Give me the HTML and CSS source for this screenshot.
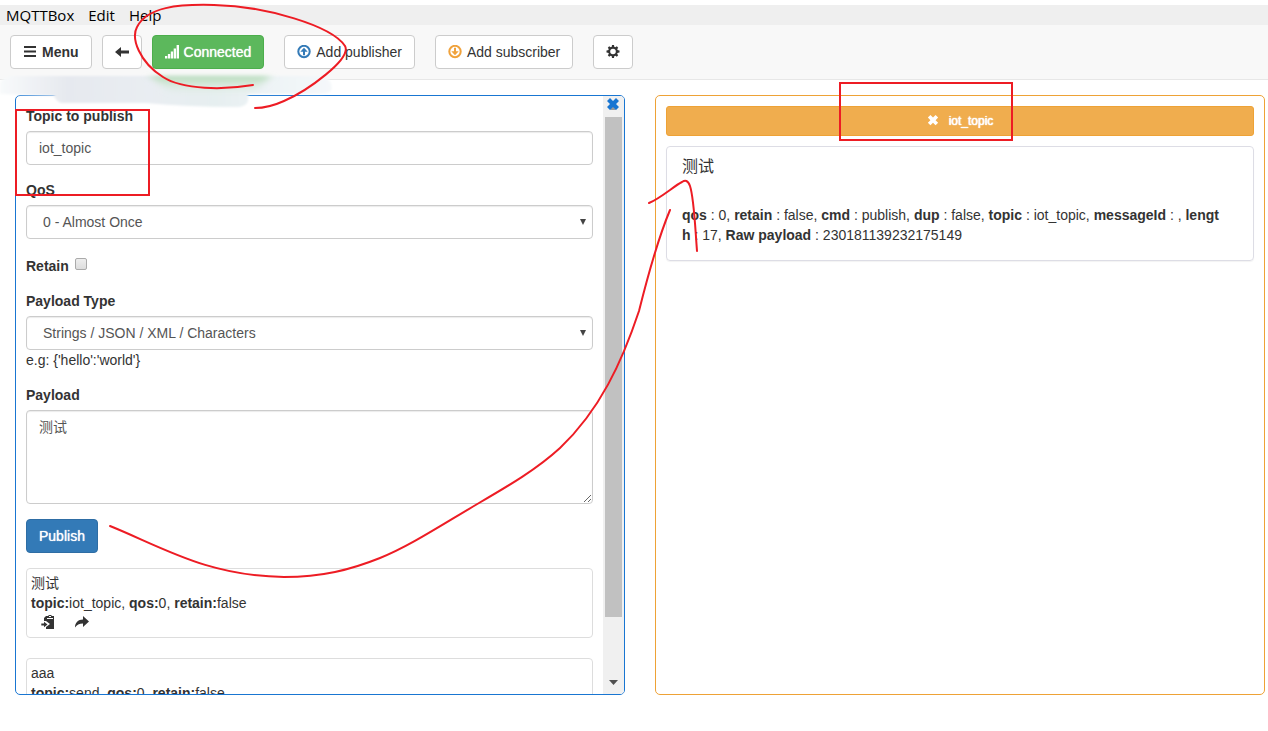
FILE: index.html
```html
<!DOCTYPE html>
<html lang="en">
<head>
<meta charset="utf-8">
<title>MQTTBox</title>
<link rel="stylesheet" href="styles.css">
</head>
<body>
<nav class="menubar">
  <a class="menubar-item" href="#">MQTTBox</a>
  <a class="menubar-item" href="#">Edit</a>
  <a class="menubar-item" href="#">Help</a>
</nav>

<header class="toolbar">
  <button class="btn btn-bold" type="button">
    <svg class="icon" viewBox="0 0 14 14"><path d="M1 1h12v2H1zM1 5.500h12v2H1zM1 10h12v2H1z"/></svg>
    <span>Menu</span>
  </button>
  <button class="btn" type="button" aria-label="Back">
    <svg class="icon" viewBox="0 0 14 14"><path d="M0 7l6-5v3.500h8v3H6V12z"/></svg>
  </button>
  <button class="btn btn-success" type="button">
    <svg class="icon" viewBox="0 0 14 14"><path d="M0 11h2.300v2.500H0zM2.900 9h2.300v4.500H2.900zM5.800 6.500h2.300v7H5.800zM8.700 3.500H11v10H8.700zM11.600 0H14v13.500h-2.400z"/></svg>
    <span>Connected</span>
  </button>
  <button class="btn btn-gap" type="button">
    <svg class="icon icon-blue" viewBox="0 0 14 14"><circle class="ring" cx="7" cy="6.500" r="5.700"/><path d="M7 2.800l3.700 4H8v3.500H6V6.800H3.300z"/></svg>
    <span>Add publisher</span>
  </button>
  <button class="btn btn-gap" type="button">
    <svg class="icon icon-orange" viewBox="0 0 14 14"><circle class="ring" cx="7" cy="6.500" r="5.700"/><path d="M7 10.300l3.700-4H8V2.800H6v3.500H3.300z"/></svg>
    <span>Add subscriber</span>
  </button>
  <button class="btn btn-gap" type="button" aria-label="Settings">
    <svg class="icon" viewBox="0 0 14 14"><circle class="gear" cx="7" cy="6.500" r="3.800"/><path d="M6 0h2l.4 2.500H5.600zM6 13h2l.4-2.500H5.600zM.5 5.500v2l2.500.4V5.100zM13.500 5.500v2L11 7.900V5.100zM1.800 2.700l1.400-1.400 2 1.500-1.900 1.900zM12.200 2.700l-1.400-1.400-2 1.500 1.900 1.900zM1.800 10.300l1.400 1.400 2-1.500-1.900-1.900zM12.200 10.300l-1.400 1.400-2-1.500 1.900-1.900z"/></svg>
  </button>
</header>

<main class="workspace">
  <section class="panel panel-publisher">
    <div class="panel-body">
      <div class="field">
        <label for="topic">Topic to publish</label>
        <input class="control" id="topic" type="text" value="iot_topic">
      </div>
      <div class="field">
        <label for="qos">QoS</label>
        <div class="select-wrap">
          <select class="control" id="qos"><option>0 - Almost Once</option></select>
        </div>
      </div>
      <div class="field field-inline">
        <label for="retain">Retain</label>
        <input class="check" id="retain" type="checkbox">
      </div>
      <div class="field">
        <label for="ptype">Payload Type</label>
        <div class="select-wrap">
          <select class="control" id="ptype"><option>Strings / JSON / XML / Characters</option></select>
        </div>
        <p class="hint">e.g: {'hello':'world'}</p>
      </div>
      <div class="field">
        <label for="payload">Payload</label>
        <textarea class="control control-area" id="payload">测试</textarea>
      </div>
      <button class="btn btn-primary" type="button">Publish</button>
      <article class="sent">
        <p>测试</p>
        <p><b>topic:</b>iot_topic, <b>qos:</b>0, <b>retain:</b>false</p>
        <div class="sent-actions">
          <button class="icon-btn" type="button" aria-label="Copy">
            <svg class="icon" viewBox="0 0 14 14"><path d="M3 3l2-2h2l1-1h2l1 1h2v13H5v-2l4-3-4-3H3z"/><path class="cut" d="M6 3.500h6M8 1.500h2"/><path d="M1 8.500h2V6.800L6.500 9.500 3 12.200v-1.700H1zM0 8.500h.7v2H0z"/></svg>
          </button>
          <button class="icon-btn" type="button" aria-label="Send again">
            <svg class="icon" viewBox="0 0 14 14"><path d="M8 1l6 5.500L8 12V8.500C4 8.500 2 10 0 12.500 0 8 3 4.500 8 4.500z"/></svg>
          </button>
        </div>
      </article>
      <article class="sent">
        <p>aaa</p>
        <p><b>topic:</b>send, <b>qos:</b>0, <b>retain:</b>false</p>
        <div class="sent-actions"></div>
      </article>
    </div>
    <div class="scrollbar">
      <button class="icon-btn close" type="button" aria-label="Remove publisher">
        <svg class="icon" viewBox="0 0 14 14"><path class="shade" d="M3 13l3-4 3 4z"/><path d="M3 1l3 3 3-3 3 3-3 3 3 3-3 3-3-3-3 3-3-3 3-3-3-3z"/></svg>
      </button>
      <div class="thumb"></div>
      <svg class="arrow" viewBox="0 0 9 5"><path d="M0 0h9L4.500 5z"/></svg>
    </div>
  </section>

  <section class="panel panel-subscriber">
    <button class="topic-bar" type="button">
      <svg class="icon icon-small" viewBox="0 0 14 14"><path d="M4 0l3 3 3-3 3 3-3 3 3 3-3 3-3-3-3 3-3-3 3-3-3-3z"/></svg>
      <span>iot_topic</span>
    </button>
    <article class="message">
      <p class="message-text">测试</p>
      <p class="message-meta"><b>qos</b> : 0, <b>retain</b> : false, <b>cmd</b> : publish, <b>dup</b> : false, <b>topic</b> : iot_topic, <b>messageId</b> : , <b>lengt<br>h</b> : 17, <b>Raw payload</b> : 230181139232175149</p>
    </article>
  </section>
</main>

<svg class="markup" width="1268" height="731" viewBox="0 0 1268 731" aria-hidden="true">
  <defs>
    <linearGradient id="smear" x1="0" x2="1" y1="0" y2="0">
      <stop offset="0" stop-color="#f8fafb"/>
      <stop offset=".2" stop-color="#e6e9ef"/>
      <stop offset=".45" stop-color="#e9edf2"/>
      <stop offset=".65" stop-color="#e6eff0"/>
      <stop offset=".8" stop-color="#edf3f6"/>
      <stop offset="1" stop-color="#f5f8fa"/>
    </linearGradient>
    <linearGradient id="green" x1="0" x2="0" y1="0" y2="1">
      <stop offset="0" stop-color="#b4dbb6"/>
      <stop offset="1" stop-color="#e4efe9" stop-opacity="0"/>
    </linearGradient>
    <filter id="soft" x="-10%" y="-30%" width="120%" height="160%"><feGaussianBlur stdDeviation="1"/></filter>
    <filter id="softer" x="-20%" y="-60%" width="140%" height="220%"><feGaussianBlur stdDeviation="5 2"/></filter>
  </defs>
  <path class="smear" d="M12 76H322Q334 80 331 91Q328 94 318 94H248V101Q246 107 236 107Q190 107 145 103H61Q56 101 54 96L0 94V82Q2 78 12 76z"/>
  <path class="smear-green" d="M150 76H270L252 96H175z"/>
  <path class="pen" d="M253 85C224 90 183 90 163 77C139 62 131 38 137 27C147 7 178 4 214 5C266 6 332 26 345 46C352 59 307 91 284 101C273 106 265 108 255 108"/>
  <rect class="pen" x="16" y="110" width="133" height="85"/>
  <rect class="pen" x="840" y="83" width="172" height="57"/>
  <path class="pen" d="M110 526C162 547 207 576 284 577C322 577 350 570 380 558C408 547 440 526 479 503C510 485 537 469 560 448C600 410 622 362 639 311C648 275 657 241 670 210"/>
  <path class="pen" d="M649 203C661 198 674 186 682 182C685 180 688 180 690 186C694 198 695 225 697 251"/>
</svg>
</body>
</html>
```

FILE: styles.css
```css
* { box-sizing: border-box; }

body {
  position: relative;
  min-height: 100vh;
  margin: 0;
  padding-top: 5px;
  overflow: hidden;
  background: #fff;
  color: #333;
  font: 14px/20px "Liberation Sans", Arial, "Noto Sans CJK SC", sans-serif;
}

p { margin: 0; }
button, input, select, textarea { font: inherit; color: inherit; }

.menubar {
  display: flex;
  gap: 14px;
  height: 20px;
  padding-left: 6px;
  background: #efefef;
  font: 15px/21px "Open Sans", "Noto Sans", sans-serif;
}
.menubar-item { color: #000; text-decoration: none; }

.toolbar {
  display: flex;
  gap: 10px;
  padding: 10px;
  background: #f8f8f8;
  border-bottom: 1px solid #e7e7e7;
}

.btn {
  display: inline-flex;
  align-items: center;
  gap: 5px;
  height: 34px;
  padding: 0 12px;
  border: 1px solid #ccc;
  border-radius: 4px;
  background: #fff;
  white-space: nowrap;
}
.btn-bold { font-weight: bold; }
.btn-gap { margin-left: 10px; }
.btn-success, .btn-primary { color: #fff; text-shadow: 0 0 1px #fff; }
.btn-success { background: #5cb85c; border-color: #4cae4c; }
.btn-primary { background: #337ab7; border-color: #2e6da4; }

.icon { display: block; flex: none; width: 14px; height: 14px; fill: currentColor; }
.icon-small { width: 12px; height: 12px; }
.icon-blue { color: #337ab7; }
.icon-orange { color: #f0a23c; }
.ring, .gear, .cut { fill: none; stroke: currentColor; stroke-width: 2; }
.cut { stroke: #fff; stroke-width: 1; }

.workspace {
  display: grid;
  grid-template-columns: 1fr 1fr;
  gap: 30px;
  padding: 15px 3px 0 15px;
}

.panel {
  height: calc(100vh - 131px);
  overflow: hidden;
  border: 1px solid;
  border-radius: 5px;
}
.panel-publisher { display: flex; border-color: #1976d2; }
.panel-subscriber { padding: 10px; border-color: #eea236; }
.panel-body { flex: 1; min-width: 0; padding: 10px; }

.field { margin-bottom: 15px; }
.field label { display: block; margin-bottom: 5px; font-weight: bold; }
.field-inline { display: flex; gap: 6px; padding-top: 2px; }
.field-inline label { margin: 0; }

.control {
  display: block;
  width: 100%;
  height: 34px;
  margin: 0;
  padding: 6px 12px;
  border: 1px solid #ccc;
  border-radius: 4px;
  background: #fff;
  box-shadow: inset 0 1px 1px rgba(0, 0, 0, .08);
  color: #555;
}
select.control { padding: 0 16px; appearance: none; }
.control-area { height: 94px; resize: vertical; }

.select-wrap { position: relative; }
.select-wrap::after {
  content: "";
  position: absolute;
  top: 14px;
  right: 7px;
  border: 3px solid transparent;
  border-top: 6px solid #444;
  border-bottom: 0;
  pointer-events: none;
}

.check {
  appearance: none;
  width: 12px;
  height: 12px;
  margin: 2px 0 0;
  border: 1px solid #aaa;
  border-radius: 2px;
  background: linear-gradient(#eee, #ddd);
}

.sent {
  margin-top: 15px;
  padding: 4px;
  border: 1px solid #ddd;
  border-radius: 4px;
}
.sent + .sent { margin-top: 20px; }
.sent-actions { display: flex; gap: 20px; height: 20px; padding: 2px 10px; }

.icon-btn { height: 14px; padding: 0; border: 0; background: none; }

.scrollbar {
  display: flex;
  flex-direction: column;
  align-items: center;
  width: 21px;
  padding: 1px 0 9px;
  background: #f0f0f0;
}
.close { height: 20px; color: #1976d2; }
.close .icon { margin-bottom: 6px; }
.shade { fill: #999; }
.thumb { width: 17px; height: 85%; background: #c1c1c1; }
.arrow { width: 9px; height: 5px; margin-top: auto; fill: #505050; }

.topic-bar {
  display: flex;
  align-items: center;
  justify-content: center;
  gap: 10px;
  width: 100%;
  height: 30px;
  margin-bottom: 10px;
  border: 1px solid #eea236;
  border-radius: 3px;
  background: #f0ad4e;
  color: #fff;
  font-size: 12px;
  text-shadow: 0 0 1px #fff, 0 0 1px #fff;
}

.message {
  padding: 10px 15px 15px;
  border: 1px solid #dddde5;
  border-radius: 4px;
  box-shadow: 0 1px 1px rgba(0, 0, 0, .05);
}
.message-text { margin-bottom: 28px; font-size: 16px; }
.message-meta { word-break: break-all; }

.markup { position: absolute; top: 0; left: 0; pointer-events: none; }
.pen { fill: none; stroke: #ed1c24; stroke-width: 2; stroke-linecap: round; }
.smear { fill: url(#smear); filter: url(#soft); }
.smear-green { fill: url(#green); filter: url(#softer); }
```
